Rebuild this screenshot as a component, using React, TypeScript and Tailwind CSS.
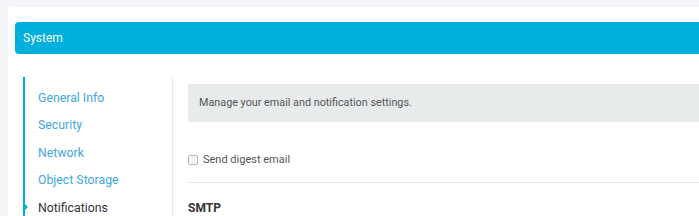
import React from "react";

const items = ["General Info", "Security", "Network", "Object Storage", "Notifications"];

export default function App() {
  return (
    <div
      className="w-[699px] h-[216px] overflow-hidden bg-[#f4f5f9] pt-[7px] pl-[8px]"
      style={{ fontFamily: 'Roboto, "Liberation Sans", Arial, sans-serif' }}
    >
      <div className="w-[720px] h-[260px] bg-white rounded-[4px] pt-[15px] pl-[7px]">
        <div className="h-[32px] bg-[#00afdb] rounded-l-[4px] flex items-center pl-[8px] text-white text-[12px]">
          System
        </div>
        <div className="flex mt-[23px] ml-[8px]">
          <div className="w-[150px] h-[160px] border-r border-[#e6e8ea] flex">
            <div className="w-[2px] h-full bg-[#00afdb] relative">
              <div className="absolute left-[2px] top-[127px] w-0 h-0 border-y-[3px] border-y-transparent border-l-[3px] border-l-[#00afdb]" />
            </div>
            <div className="pt-[7px] pl-[13px] flex flex-col">
              {items.map((t, i) => (
                <div
                  key={t}
                  className={`h-[27.5px] flex items-center text-[12.3px] ${
                    i === items.length - 1 ? "text-[#333333]" : "text-[#3fa7dc]"
                  }`}
                >
                  {t}
                </div>
              ))}
            </div>
          </div>
          <div className="flex-1 pl-[15px] pt-[7px]">
            <div className="h-[38px] bg-[#e8ebec] flex items-center pl-[11px] text-[10.8px] text-[#555555]">
              Manage your email and notification settings.
            </div>
            <div className="flex items-center mt-[32px] h-[12px]">
              <div className="w-[10px] h-[10px] border border-[#b8b8b8] rounded-[2px] bg-[#f4f4f4]" />
              <span className="ml-[5px] text-[11px] text-[#555555]">Send digest email</span>
            </div>
            <div className="mt-[16px] h-px bg-[#e6e8ea]" />
            <div className="mt-[16px] text-[12px] font-bold text-[#333333]">SMTP</div>
          </div>
        </div>
      </div>
    </div>
  );
}
